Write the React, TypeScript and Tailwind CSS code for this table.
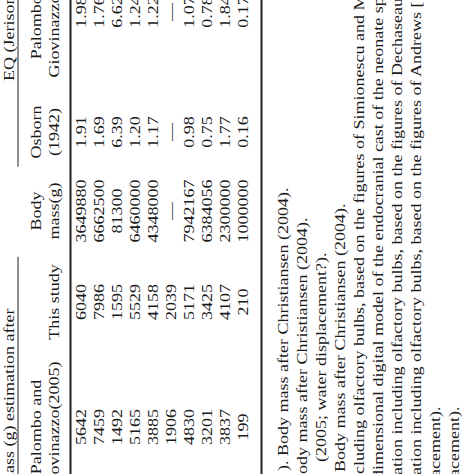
const rows: string[][] = [
  ["5642", "6040", "3649880", "1.91", "1.98"],
  ["7459", "7986", "6662500", "1.69", "1.76"],
  ["1492", "1595", "81300", "6.39", "6.62"],
  ["5165", "5529", "6460000", "1.20", "1.24"],
  ["3885", "4158", "4348000", "1.17", "1.22"],
  ["1906", "2039", "—", "—", "—"],
  ["4830", "5171", "7942167", "0.98", "1.07"],
  ["3201", "3425", "6384056", "0.75", "0.78"],
  ["3837", "4107", "2300000", "1.77", "1.84"],
  ["199", "210", "1000000", "0.16", "0.17"],
];

const notes: { text: string; cls: string }[] = [
  { text: "). Body mass after Christiansen (2004).", cls: "ml-[2.5px]" },
  { text: "Body mass after Christiansen (2004).", cls: "ml-[-10px]" },
  { text: "(2005; water displacement?).", cls: "ml-[10px]" },
  { text: "Body mass after Christiansen (2004).", cls: "ml-[1.7px]" },
  { text: "including olfactory bulbs, based on the figures of Simionescu and Mohr", cls: "ml-[-11.7px]" },
  { text: "dimensional digital model of the endocranial cast of the neonate specimen", cls: "ml-[-4.2px]" },
  { text: "ation including olfactory bulbs, based on the figures of Dechaseaux", cls: "ml-[-0.8px]" },
  { text: "ation including olfactory bulbs, based on the figures of Andrews [14]", cls: "ml-[-0.8px]" },
  { text: "acement).", cls: "ml-[-2.5px]" },
  { text: "acement).", cls: "ml-[-2.5px]" },
];

const grid = "grid grid-cols-[104.1px_104.1px_47.7px_84px_116px] ml-[-12.85px] w-[455.9px] whitespace-nowrap";
const cell = "flex justify-center";

export default function App() {
  return (
    <div className="w-[474px] h-[474px] overflow-hidden bg-white">
      <div className="ml-[39.5px] w-[395px] h-[474px] -rotate-90 scale-x-120 overflow-hidden bg-white text-[#1a1a1a] font-['Liberation_Serif',serif] text-[15px] leading-[18px]">
        <div className="flex h-[18px] mt-[-1px] whitespace-nowrap">
          <div className="ml-[-47.1px] w-[374.6px] shrink-0">Body mass (g) estimation after</div>
          <div className="shrink-0">EQ (Jerison, 1973) estimation after</div>
        </div>
        <div className="flex h-px">
          <div className="ml-[-16.7px] w-[198px] shrink-0 bg-[#222]" />
          <div className="w-[74.5px] shrink-0" />
          <div className="w-[160px] shrink-0 bg-[#222]" />
        </div>
        <div className={`${grid} mt-[8px]`}>
          <div className="flex flex-col items-center">
            <span>Palombo and</span>
            <span>Giovinazzo(2005)</span>
          </div>
          <div className="flex flex-col items-center justify-end">
            <span>This study</span>
          </div>
          <div className="flex flex-col items-center">
            <span>Body</span>
            <span>mass(g)</span>
          </div>
          <div className="flex flex-col items-center">
            <span>Osborn</span>
            <span>(1942)</span>
          </div>
          <div className="flex flex-col items-center">
            <span>Palombo and</span>
            <span>Giovinazzo(2005)</span>
          </div>
        </div>
        <div className="mt-[7px] h-[2px] w-[395px] bg-[#222]" />
        <div className="flex flex-col">
          {rows.map((r, i) => (
            <div key={i} className={`${grid} h-[18px]`}>
              {r.map((v, j) => (
                <div key={j} className={cell}>
                  <span>{v}</span>
                </div>
              ))}
            </div>
          ))}
        </div>
        <div className="mt-[9px] h-[2px] w-[395px] bg-[#222]" />
        <div className="mt-[11px] flex flex-col leading-[19px] whitespace-nowrap">
          {notes.map((n, i) => (
            <div key={i} className={`h-[19px] ${n.cls}`}>{n.text}</div>
          ))}
        </div>
      </div>
    </div>
  );
}
